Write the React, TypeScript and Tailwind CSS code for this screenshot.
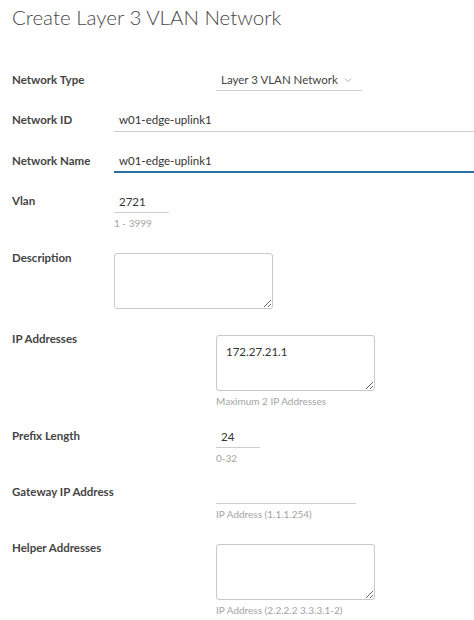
import React from 'react';

const FONT = { fontFamily: 'Lato, "Open Sans", "Liberation Sans", sans-serif' };

function Label({ children }: { children: React.ReactNode }) {
  return (
    <div className="w-[102px] shrink-0 text-[11.5px] leading-4 font-bold text-[#444]">
      {children}
    </div>
  );
}

function Helper({ children }: { children: React.ReactNode }) {
  return <div className="text-[10px] leading-4 text-[#a3a3a3] mt-[2px]">{children}</div>;
}

export default function App() {
  return (
    <div className="w-[474px] h-[620px] overflow-hidden bg-white text-[#333]" style={FONT}>
      {/* header */}
      <div className="h-[72px] pl-3 pt-[5px]">
        <h1 className="text-[20.5px] leading-6 font-light text-[#474747]">Create Layer 3 VLAN Network</h1>
      </div>

      <div className="pl-3">
        {/* Network Type */}
        <div className="flex h-[40px]">
          <Label>Network Type</Label>
          <div className="ml-[102px] w-[146px] h-[19px] border-b border-[#cfcfcf] pl-[5px] flex items-start">
            <span className="text-[11.5px] leading-4 text-[#444]">Layer 3 VLAN Network</span>
            <svg className="ml-[6px] mt-[5px]" width="8" height="6" viewBox="0 0 8 6" fill="none">
              <path d="M1 1.5 L4 4.5 L7 1.5" stroke="#b0b0b0" strokeWidth="1" />
            </svg>
          </div>
        </div>

        {/* Network ID */}
        <div className="flex h-[41px]">
          <Label>Network ID</Label>
          <div className="flex-1 h-[20px] border-b-[1.5px] border-[#cdcdcd] pl-[5px] text-[11.5px] leading-4 text-[#333]">
            w01-edge-uplink1
          </div>
        </div>

        {/* Network Name */}
        <div className="flex h-[40px]">
          <Label>Network Name</Label>
          <div className="flex-1 h-[20px] border-b-2 border-[#2a6fa3] pl-[5px] text-[11.5px] leading-4 text-[#333]">
            w01-edge-uplink1
          </div>
        </div>

        {/* Vlan */}
        <div className="flex h-[57px]">
          <Label>Vlan</Label>
          <div>
            <div className="w-[55px] h-[20px] border-b border-[#cfcfcf] pl-[5px] pt-[1px] text-[11.5px] leading-4 text-[#333]">
              2721
            </div>
            <Helper>1 - 3999</Helper>
          </div>
        </div>

        {/* Description */}
        <div className="flex h-[81px]">
          <Label>Description</Label>
          <textarea
            className="mt-[3px] w-[159px] h-[56px] border-[1.5px] border-[#c8c8c8] rounded-[3px] outline-none"
            defaultValue=""
          />
        </div>

        {/* IP Addresses */}
        <div className="flex h-[97px]">
          <Label>IP Addresses</Label>
          <div className="ml-[102px] mt-[4px]">
            <textarea
              className="block w-[159px] h-[56px] border-[1.5px] border-[#c8c8c8] rounded-[3px] pl-[9px] pt-[8px] text-[11.5px] leading-4 text-[#333] outline-none"
              defaultValue="172.27.21.1"
            />
            <Helper>Maximum 2 IP Addresses</Helper>
          </div>
        </div>

        {/* Prefix Length */}
        <div className="flex h-[56px]">
          <Label>Prefix Length</Label>
          <div className="ml-[102px]">
            <div className="w-[44px] h-[20px] border-b border-[#cfcfcf] pl-[5px] pt-[1px] text-[11.5px] leading-4 text-[#333]">
              24
            </div>
            <Helper>0-32</Helper>
          </div>
        </div>

        {/* Gateway IP Address */}
        <div className="flex h-[56px]">
          <Label>Gateway IP Address</Label>
          <div className="ml-[102px]">
            <div className="w-[140px] h-[20px] border-b border-[#cfcfcf]" />
            <Helper>IP Address (1.1.1.254)</Helper>
          </div>
        </div>

        {/* Helper Addresses */}
        <div className="flex">
          <Label>Helper Addresses</Label>
          <div className="ml-[102px] mt-[4px]">
            <textarea
              className="block w-[159px] h-[56px] border-[1.5px] border-[#c8c8c8] rounded-[3px] outline-none"
              defaultValue=""
            />
            <Helper>IP Address (2.2.2.2 3.3.3.1-2)</Helper>
          </div>
        </div>
      </div>
    </div>
  );
}
